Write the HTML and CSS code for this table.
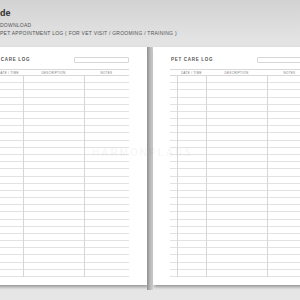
FILE: index.html
```html
<!DOCTYPE html>
<html lang="en">
<head>
<meta charset="utf-8">
<title>Pet Care Log</title>
<link rel="stylesheet" href="styles.css">
</head>
<body>
<header class="intro">
  <div class="intro-title">de</div>
  <div class="intro-line">DOWNLOAD</div>
  <div class="intro-line">PET APPOINTMENT LOG ( FOR VET VISIT / GROOMING / TRAINING )</div>
</header>
<main class="spread">
  <section class="page page-left">
    <div class="page-head">
      <h2 class="page-title">PET CARE LOG</h2>
      <div class="name-box"></div>
    </div>
    <div class="log-head">
      <span></span><span>DATE / TIME</span><span>DESCRIPTION</span><span>NOTES</span>
    </div>
    <div class="log-body">
      <div></div><div></div><div></div><div></div>
    </div>
  </section>
  <div class="spine"></div>
  <section class="page page-right">
    <div class="page-head">
      <h2 class="page-title">PET CARE LOG</h2>
      <div class="name-box"></div>
    </div>
    <div class="log-head">
      <span></span><span>DATE / TIME</span><span>DESCRIPTION</span><span>NOTES</span>
    </div>
    <div class="log-body">
      <div></div><div></div><div></div><div></div>
    </div>
  </section>
  <div class="watermark">HARMONPLANS</div>
</main>
</body>
</html>
```
FILE: styles.css
```css
* { box-sizing: border-box; }
html, body { margin: 0; padding: 0; }
body {
  width: 300px;
  height: 300px;
  overflow: hidden;
  background: linear-gradient(#d2d2d2 0, #e3e3e3 40px, #e6e6e6 100%);
  font-family: "Liberation Sans", Arial, sans-serif;
  color: #333;
}
.intro {
  padding-top: 8px;
  height: 36px;
}
.intro-title {
  font-size: 9px;
  font-weight: bold;
  line-height: 10px;
  color: #2e2e2e;
  margin-bottom: 3px;
}
.intro-line {
  font-size: 5px;
  line-height: 8px;
  letter-spacing: 0.25px;
  color: #555;
}
.spread {
  position: relative;
  display: flex;
  align-items: flex-start;
  padding-top: 11px;
  height: 264px;
}
.page {
  flex: none;
  width: 177px;
  height: 238px;
  background: #fff;
  padding: 9px 18px 7px 17px;
  box-shadow: 1px 2px 3px rgba(0,0,0,0.35);
}
.page-left { margin-left: -30px; }
.spine {
  flex: none;
  width: 6px;
  height: 243px;
  background: linear-gradient(to right, #8f8f8f, #b3b3b3 45%, #d6d6d6);
}
.page-head {
  display: flex;
  align-items: center;
  justify-content: space-between;
  height: 7px;
}
.page-title {
  margin: 0 0 0 1px;
  font-size: 4.5px;
  font-weight: bold;
  letter-spacing: 0.7px;
  color: #555;
}
.name-box {
  width: 55px;
  height: 6px;
  border: 0.6px solid #d6d6d6;
  border-radius: 1px;
}
.log-head {
  margin-top: 6px;
  display: grid;
  grid-template-columns: 7px 29px 61px 1fr;
  height: 7px;
  border-top: 1px solid #d8d8d8;
  border-bottom: 1px solid #d8d8d8;
}
.log-head span {
  font-size: 3px;
  letter-spacing: 0.3px;
  color: #777;
  text-align: center;
  line-height: 6px;
}
.log-body {
  display: grid;
  grid-template-columns: 7px 29px 61px 1fr;
  height: 201px;
  background: repeating-linear-gradient(to bottom, transparent 0, transparent 6.18px, #e2e2e2 6.18px, #e2e2e2 7.18px);
}
.log-body div + div { border-left: 1px solid #d6d6d6; }
.watermark {
  position: absolute;
  left: 92px;
  top: 111px;
  font-size: 10px;
  font-weight: bold;
  letter-spacing: 2px;
  color: rgba(0,0,0,0.05);
}
```
